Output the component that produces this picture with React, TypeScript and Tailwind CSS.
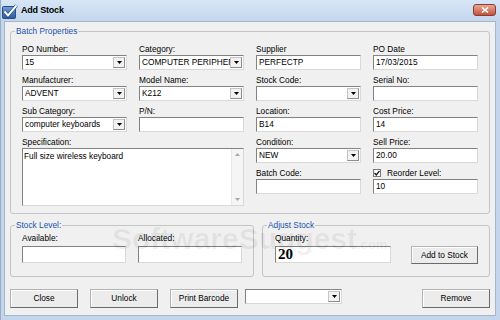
import React from 'react';

const sunken =
  'bg-white border border-t-[#828282] border-l-[#828282] border-r-[#d9d9d9] border-b-[#d9d9d9]';

function Arrow({ up = false, color = '#000' }: { up?: boolean; color?: string }) {
  return (
    <svg width="5" height="3" viewBox="0 0 5 3">
      <path d={up ? 'M0 3h5L2.5 0z' : 'M0 0h5L2.5 3z'} fill={color} />
    </svg>
  );
}

function Label({ children, className = '' }: { children?: React.ReactNode; className?: string }) {
  return <div className={`h-[12px] leading-[12px] whitespace-nowrap ${className}`}>{children}</div>;
}

function TextBox({ value = '', className = 'h-[15px]' }: { value?: React.ReactNode; className?: string }) {
  return (
    <div className={`${sunken} flex items-center px-[2px] leading-none overflow-hidden whitespace-nowrap ${className}`}>
      {value}
    </div>
  );
}

function Combo({ value = '', className = '' }: { value?: string; className?: string }) {
  return (
    <div className={`${sunken} h-[15px] flex items-stretch ${className}`}>
      <span className="flex-1 min-w-0 overflow-hidden whitespace-nowrap flex items-center pl-[2px] leading-none">
        {value}
      </span>
      <span className="w-[12px] my-[1px] mr-[1px] bg-[#f2f2f2] border border-[#c4c4c4] border-r-[#8c8c8c] border-b-[#8c8c8c] flex items-center justify-center">
        <Arrow />
      </span>
    </div>
  );
}

function Field({ label, children }: { label: React.ReactNode; children: React.ReactNode }) {
  return (
    <div className="flex flex-col">
      <Label>{label}</Label>
      {children}
    </div>
  );
}

function Group({ title, className = '', children }: { title: string; className?: string; children: React.ReactNode }) {
  return (
    <fieldset className={`border border-[#c4c4c4] rounded-[3px] ${className}`}>
      <legend className="ml-[4px] px-[1px] h-[12px] leading-[12px] text-[#2050ad]">{title}</legend>
      {children}
    </fieldset>
  );
}

function Btn({ children, className = '' }: { children: React.ReactNode; className?: string }) {
  return (
    <button
      type="button"
      className={`flex items-center justify-center bg-[#ececec] border border-[#b3b3b3] border-r-[#6b6b6b] border-b-[#6b6b6b] shadow-[inset_1px_1px_0_#ffffff] leading-none ${className}`}
    >
      {children}
    </button>
  );
}

export default function App() {
  return (
    <div className="relative w-[500px] h-[320px] bg-[#c3d6ec] flex flex-col font-['Liberation_Sans',Arial,sans-serif] text-[8.3px] text-black overflow-hidden border-l border-[#97acc6]">
      {/* title bar */}
      <div className="h-[21px] shrink-0 flex items-center bg-linear-to-b from-[#d7e6f6] to-[#c3d6ec]">
        <svg width="16" height="15" viewBox="0 0 16 15" className="ml-[1px] mt-[1px]">
          <defs>
            <linearGradient id="ic" x1="0" y1="0" x2="0" y2="1">
              <stop offset="0" stopColor="#6f9fd6" />
              <stop offset="1" stopColor="#2a5a9c" />
            </linearGradient>
          </defs>
          <rect x="0.5" y="2.5" width="13" height="12" rx="1" fill="url(#ic)" stroke="#254f8a" />
          <path d="M2.5 7.5 L6 11.5 L14.5 1.5" fill="none" stroke="#1d3f70" strokeWidth="3.4" />
          <path d="M2.5 7.5 L6 11.5 L14.5 1.5" fill="none" stroke="#ffffff" strokeWidth="2" />
        </svg>
        <span className="ml-[3px] text-[9px] font-bold tracking-[-0.2px]">Add Stock</span>
        <div className="ml-auto mr-[4px] mt-[-1px] w-[23px] h-[12px] rounded-[3px] border border-[#8d3b2e] bg-linear-to-b from-[#e6a896] to-[#c2513d] flex items-center justify-center">
          <svg width="8" height="6" viewBox="0 0 8 6">
            <path d="M1 0.5 L7 5.5 M7 0.5 L1 5.5" stroke="#ffffff" strokeWidth="1.6" />
          </svg>
        </div>
      </div>

      {/* client area */}
      <div className="mr-[4px] ml-[3px] h-[295px] shrink-0 bg-[#f0f0f0] border border-[#a3b6cc] flex flex-col">
        <Group title="Batch Properties" className="mt-[3px] ml-[5px] w-[480px]">
          <div className="px-[11px] pt-[6px] pb-[7px] grid grid-cols-4 gap-x-[12px] gap-y-[4px] grid-rows-[27px_27px_27px_27px_auto]">
            <Field label="PO Number:"><Combo value="15" /></Field>
            <Field label="Category:"><Combo value="COMPUTER PERIPHERALS" /></Field>
            <Field label="Supplier"><TextBox value="PERFECTP" /></Field>
            <Field label="PO Date"><TextBox value="17/03/2015" /></Field>

            <Field label="Manufacturer:"><Combo value="ADVENT" /></Field>
            <Field label="Model Name:"><Combo value="K212" /></Field>
            <Field label="Stock Code:"><Combo /></Field>
            <Field label="Serial No:"><TextBox /></Field>

            <Field label="Sub Category:"><Combo value="computer keyboards" /></Field>
            <Field label="P/N:"><TextBox /></Field>
            <Field label="Location:"><TextBox value="B14" /></Field>
            <Field label="Cost Price:"><TextBox value="14" /></Field>

            <div className="col-span-2 row-span-2 flex flex-col">
              <Label>Specification:</Label>
              <div className={`${sunken} h-[58px] flex`}>
                <div className="flex-1 pl-[1px] pt-[3px] leading-none">Full size wireless keyboard</div>
                <div className="w-[12px] bg-[#f5f5f5] border-l border-[#e8e8e8] flex flex-col items-center justify-between pt-[4px] pb-[4px]">
                  <Arrow up color="#a8a8a8" />
                  <Arrow color="#a8a8a8" />
                </div>
              </div>
            </div>
            <Field label="Condition:"><Combo value="NEW" /></Field>
            <Field label="Sell Price:"><TextBox value="20.00" /></Field>

            <Field label="Batch Code:"><TextBox /></Field>
            <div className="flex flex-col">
              <div className="h-[12px] flex items-center">
                <span className="w-[8px] h-[8px] bg-white border border-[#7a7a7a] flex items-center justify-center">
                  <svg width="6" height="6" viewBox="0 0 6 6">
                    <path d="M0.5 3 L2.3 5 L5.5 0.8" fill="none" stroke="#1a1a1a" strokeWidth="1.3" />
                  </svg>
                </span>
                <span className="ml-[6px] leading-[12px]">Reorder Level:</span>
              </div>
              <TextBox value="10" />
            </div>
          </div>
        </Group>

        <div className="mt-[5px] ml-[5px] flex gap-[8px]">
          <Group title="Stock Level:" className="w-[244px]">
            <div className="px-[11px] pt-[1px] pb-[12px] grid grid-cols-2 gap-x-[12px]">
              <div>
                <Label>Available:</Label>
                <TextBox className="h-[17px] mt-[2px]" />
              </div>
              <div>
                <Label>Allocated:</Label>
                <TextBox className="h-[17px] mt-[2px]" />
              </div>
            </div>
          </Group>
          <Group title="Adjust Stock" className="w-[228px]">
            <div className="pl-[12px] pr-[11px] pt-[1px] pb-[12px] flex items-start">
              <div className="w-[116px]">
                <Label>Quantity:</Label>
                <TextBox
                  className="h-[17px] mt-[2px] font-['Liberation_Serif',serif] font-bold text-[15px]"
                  value="20"
                />
              </div>
              <Btn className="ml-auto mt-[14px] w-[67px] h-[18px]">Add to Stock</Btn>
            </div>
          </Group>
        </div>

        <div className="mt-[12px] ml-[5px] mr-[5px] flex items-start">
          <Btn className="w-[68px] h-[19px]">Close</Btn>
          <Btn className="ml-[12px] w-[68px] h-[19px]">Unlock</Btn>
          <Btn className="ml-[12px] w-[68px] h-[19px]">Print Barcode</Btn>
          <Combo className="ml-[7px] w-[97px]" />
          <Btn className="ml-auto w-[68px] h-[19px]">Remove</Btn>
        </div>
      </div>

      {/* watermark */}
      <div className="absolute left-[111px] top-[224px] pointer-events-none whitespace-nowrap font-bold text-black/[0.06] leading-none">
        <span className="text-[30px]">SoftwareSuggest</span>
        <span className="text-[13px]">.com</span>
      </div>
    </div>
  );
}
